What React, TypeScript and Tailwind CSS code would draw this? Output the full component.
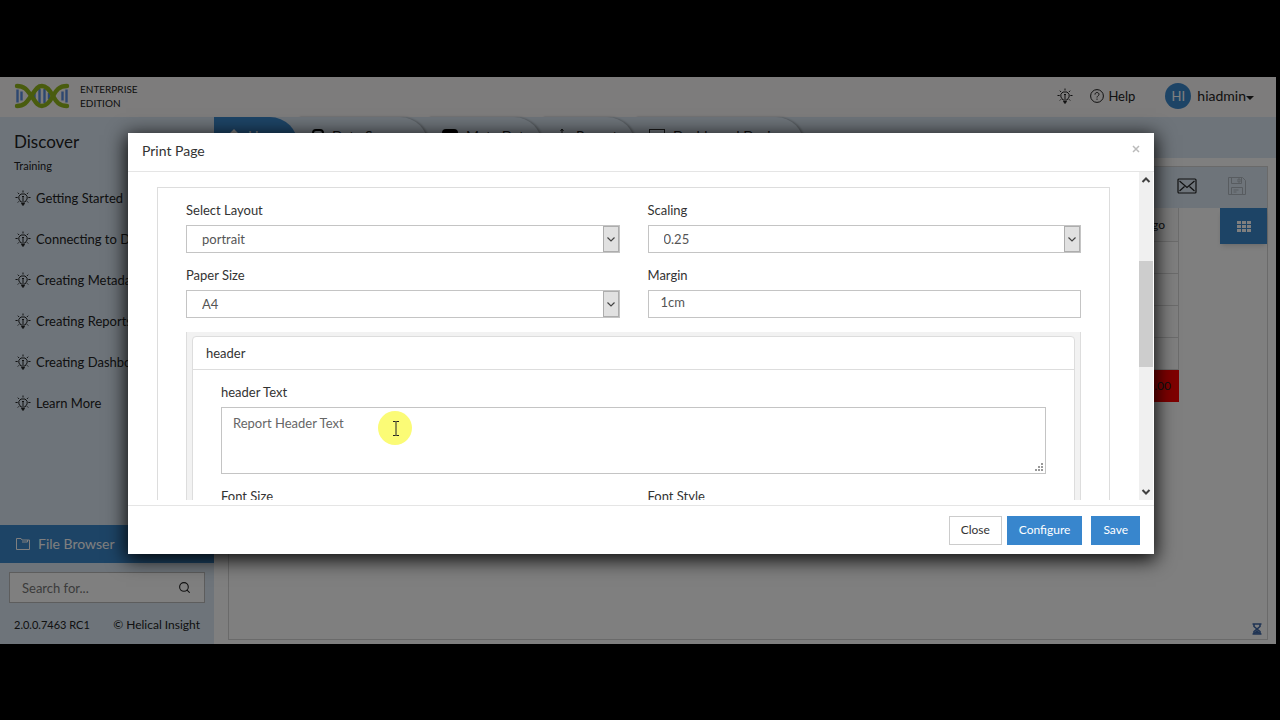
import type { ReactNode } from 'react';
import { Search } from 'lucide-react';

const TRAINING = [
  'Getting Started',
  'Connecting to Data',
  'Creating Metadata',
  'Creating Reports',
  'Creating Dashboard',
  'Learn More',
];

const ROWS = ['', '', '', ''];

function Bulb({ className = '' }: { className?: string }) {
  return (
    <svg viewBox="0 0 16 16" className={`h-4 w-4 shrink-0 ${className}`} fill="none" stroke="currentColor" strokeWidth="1">
      <path d="M6 12L3.900 9V6.200L6 4h4l2.100 2.200V9L10 12z" />
      <path d="M7 6.500h2M8 6.500v4.500" />
      <path d="M6.500 13.500h3L8 15.500z" fill="currentColor" />
      <path d="M8 .5v2M2.800 2.700l1.400 1.400M13.200 2.700l-1.400 1.400M.5 7.500h2.200M13.300 7.500h2.200M2.800 12.500l1.200-1.200M13.200 12.500l-1.200-1.200" />
    </svg>
  );
}

function Logo() {
  return (
    <svg viewBox="0 0 56 26" className="h-[26px] w-14" fill="none" strokeLinecap="round">
      <path d="M3.500 6.500v13M7.500 8.500v9M20.500 10v6M25.500 6v14M30.500 6v14M35 10v6M48.500 8.500v9M52.500 6.500v13" stroke="#5b8fe0" strokeWidth="2.400" strokeLinecap="butt" />
      <path d="M3 23C11 23 13.500 18 17.500 12.500S23 3 28 3s8 4.500 11 10 6 10 14 10" stroke="#93b81d" strokeWidth="4.400" />
      <path d="M3 3c8 0 10.500 4.500 14.500 10S23 23 28 23s8-4.500 11-10S45 3 53 3" stroke="#93b81d" strokeWidth="4.400" />
    </svg>
  );
}

function Tab({ icon, label, className }: { icon: ReactNode; label: string; className: string }) {
  return (
    <button className={`flex h-full items-center gap-2 overflow-hidden whitespace-nowrap rounded-tr-[28px] pb-1 pl-[14px] text-left text-[14px] ${className}`}>
      {icon}
      {label}
    </button>
  );
}

function SelectField({ id, label, value }: { id: string; label: string; value: string }) {
  return (
    <div className="flex-1">
      <label htmlFor={id} className="mb-[5px] block leading-5">{label}</label>
      <div className="relative">
        <select id={id} defaultValue={value} className="block h-7 w-full appearance-none border border-[#c4c4c4] bg-white pl-[15px] text-[#555]">
          <option>{value}</option>
        </select>
        <span className="pointer-events-none absolute inset-y-px right-px flex w-4 items-center justify-center border border-[#adadad] bg-[#e1e1e1]">
          <svg viewBox="0 0 10 10" className="h-[10px] w-[10px]" fill="none" stroke="#444" strokeWidth="1.200">
            <path d="M1.500 3.500 5 7l3.500-3.500" />
          </svg>
        </span>
      </div>
    </div>
  );
}

function Header() {
  return (
    <header className="flex h-10 shrink-0 items-center bg-[#fbf8f8] pb-[2px] pl-[14px] pr-[22px]">
      <Logo />
      <p className="ml-[10px] text-[10px] leading-[14px]">
        ENTERPRISE
        <br />
        EDITION
      </p>
      <div className="ml-auto flex items-center">
        <Bulb />
        <a href="#help" className="ml-[17px] flex items-center gap-1">
          <svg viewBox="0 0 14 14" className="h-[14px] w-[14px]" fill="none" stroke="currentColor">
            <circle cx="7" cy="7" r="6.400" />
            <path d="M5 5.600C5 4.300 5.800 3.500 7 3.500s2 .8 2 1.900c0 1.300-2 1.600-2 3.100M7 9.600v1.200" />
          </svg>
          Help
        </a>
        <span className="ml-[30px] flex h-[26px] w-[26px] items-center justify-center rounded-full bg-[#3b88cc] text-white">HI</span>
        <button className="ml-[6px] flex items-center text-[14px]">
          hiadmin
          <svg viewBox="0 0 8 4" className="mt-1 h-1 w-2" fill="currentColor"><path d="M0 0h8L4 4z" /></svg>
        </button>
      </div>
    </header>
  );
}

function Sidebar() {
  return (
    <aside className="flex w-[214px] shrink-0 flex-col bg-[#dce9f5]">
      <h2 className="pl-[14px] pt-[13px] text-[17px] leading-6">Discover</h2>
      <p className="pl-[14px] pt-1 text-[11px] leading-4">Training</p>
      <ul className="mt-[3px]">
        {TRAINING.map((item) => (
          <li key={item} className="flex h-[41px] items-center pl-[15px]">
            <a href="#training" className="flex items-center gap-[5px] whitespace-nowrap">
              <Bulb />
              {item}
            </a>
          </li>
        ))}
      </ul>
      <button className="mt-auto flex h-[38px] shrink-0 items-center gap-2 bg-[#3b88cc] pl-4 text-[14px] text-white">
        <svg viewBox="0 0 14 12" className="h-3 w-[14px]" fill="none" stroke="currentColor">
          <path d="M.5.500h4.500l1 1.500h7.500v9.500H.5zM6 4h5.500V2" />
        </svg>
        File Browser
      </button>
      <div className="mx-[9px] mb-[10px] mt-[9px] flex h-[31px] shrink-0 items-center border border-[#bbb] bg-white pr-[13px]">
        <input type="text" aria-label="Search" placeholder="Search for..." className="min-w-0 flex-1 pl-3 placeholder:text-[#777]" />
        <button aria-label="Find"><Search size={13} strokeWidth={2} /></button>
      </div>
      <div className="flex h-[31px] shrink-0 justify-between px-[14px] pt-[5px] leading-[14px]">
        <span className="text-[11px]">2.0.0.7463 RC1</span>
        <span className="text-[12px]">© Helical Insight</span>
      </div>
    </aside>
  );
}

function Workspace() {
  return (
    <main className="flex min-w-0 flex-1 flex-col bg-white">
      <nav className="flex h-[41px] shrink-0 bg-[#dce9f5]">
        <Tab className="w-[84px] bg-[#3b88cc] text-white" label="Home" icon={<svg viewBox="0 0 12 14" className="h-[14px] w-3" fill="currentColor"><path d="M6 0l6 6h-2v7H2V6H0z" /></svg>} />
        <Tab className="w-[130px] shadow-[2px_0_2px_#aab2ba]" label="Data Sources" icon={<span className="h-[14px] w-3 rounded-sm border-2 border-black" />} />
        <Tab className="w-[114px] shadow-[2px_0_2px_#aab2ba]" label="Meta Data" icon={<span className="h-[14px] w-4 rounded-sm bg-black" />} />
        <Tab className="w-[93px] shadow-[2px_0_2px_#aab2ba]" label="Reports" icon={<svg viewBox="0 0 12 16" className="h-4 w-3" fill="none" stroke="currentColor"><path d="M6 1v14M4.500 3 6 1l1.500 2" /></svg>} />
        <Tab className="w-[169px] shadow-[2px_0_2px_#aab2ba]" label="Dashboard Designer" icon={<span className="h-[14px] w-4 border border-[#333]" />} />
      </nav>
      <section className="mb-1 ml-[14px] mr-2 mt-2 flex flex-1 flex-col border border-[#d4d4d4]">
        <div className="flex h-[41px] shrink-0 items-center justify-end gap-[30px] bg-[#dce9f5] pb-1 pr-5">
          <button aria-label="Mail">
            <svg viewBox="0 0 20 16" className="h-4 w-5" fill="none" stroke="currentColor" strokeWidth="1.200">
              <rect x="1" y="1" width="18" height="14" rx="1" />
              <path d="M2.500 3 10 9.500 17.500 3M2.500 13l5-4.500M17.500 13l-5-4.500" />
            </svg>
          </button>
          <button aria-label="Save report" className="text-[#b0b8c0]">
            <svg viewBox="0 0 20 20" className="h-5 w-5" fill="none" stroke="currentColor">
              <path d="M1.500 1.500h14l3 3v14h-17zM4.500 1.500v6h10v-6M11 3v3h2V3zM4.500 18.500v-7h11v7M6.500 14h5M6.500 16h3" />
            </svg>
          </button>
        </div>
        <div className="flex flex-1 justify-between">
          <table className="mr-[41px] h-fit flex-1 text-right text-[12px]">
            <tbody className="flex flex-col">
              <tr className="flex h-[34px] items-center justify-end border-b border-r border-[#d8d8d8] bg-[#f9f9f9] pr-[13px]"><td>Chicago</td></tr>
              {ROWS.map((row, i) => (
                <tr key={i} className="flex h-8 border-b border-r border-[#d8d8d8]"><td>{row}</td></tr>
              ))}
              <tr className="flex h-8 items-center justify-end bg-[#f00] pr-2"><td>0.00</td></tr>
            </tbody>
          </table>
          <div className="flex flex-col items-end justify-between">
            <button aria-label="Grid" className="flex h-9 w-[47px] items-center justify-center bg-[#3b88cc] text-white shadow-md">
              <svg viewBox="0 0 14 11" className="h-[11px] w-[14px]" fill="currentColor">
                <path d="M0 0h4v3H0zM5 0h4v3H5zM10 0h4v3h-4zM0 4h4v3H0zM5 4h4v3H5zM10 4h4v3h-4zM0 8h4v3H0zM5 8h4v3H5zM10 8h4v3h-4z" />
              </svg>
            </button>
            <svg viewBox="0 0 10 12" className="mb-1 mr-[5px] h-3 w-[10px]" fill="none" stroke="#3f68a8" strokeWidth="1.600">
              <path d="M.5 1h9M.5 11h9M2 1.500v2L5 6l3-2.500v-2M2 10.500v-2L5 6l3 2.500v2" />
              <path d="M3 10h4L5 8z" fill="#3f68a8" />
            </svg>
          </div>
        </div>
      </section>
    </main>
  );
}

function ScrollBar() {
  return (
    <div className="mr-px flex w-[14px] shrink-0 flex-col justify-between bg-[#f0f0f0] py-1">
      <svg viewBox="0 0 10 8" className="mx-auto h-2 w-[10px]" fill="none" stroke="#404040" strokeWidth="2"><path d="M1.500 6 5 2.500 8.500 6" /></svg>
      <div className="mb-11 h-[106px] bg-[#cdcdcd]" />
      <svg viewBox="0 0 10 8" className="mx-auto h-2 w-[10px]" fill="none" stroke="#404040" strokeWidth="2"><path d="M1.500 2 5 5.500 8.500 2" /></svg>
    </div>
  );
}

function PrintDialog() {
  return (
    <div role="dialog" aria-label="Print Page" className="relative flex min-w-0 flex-1 flex-col bg-white text-[#333] shadow-[0_4px_18px_2px_rgba(0,0,0,0.9)]">
      <div className="flex h-[39px] shrink-0 items-center justify-between border-b border-[#e5e5e5] px-[14px] pb-[2px]">
        <h1 className="text-[14px]">Print Page</h1>
        <button aria-label="Dismiss" className="mb-1 text-[#bbb]">
          <svg viewBox="0 0 8 8" className="h-2 w-2" fill="none" stroke="currentColor" strokeWidth="1.500"><path d="M1 1l6 6M7 1 1 7" /></svg>
        </button>
      </div>

      {/* Body */}
      <div className="mb-[5px] flex min-h-0 flex-1">
        <div className="min-w-0 flex-1 overflow-hidden px-[29px] pt-[15px]">
          <div className="border border-[#ddd] px-7 pt-3">
            <div className="flex gap-7">
              <SelectField id="layout" label="Select Layout" value="portrait" />
              <SelectField id="scaling" label="Scaling" value="0.25" />
            </div>
            <div className="mt-3 flex gap-7">
              <SelectField id="paper" label="Paper Size" value="A4" />
              <div className="flex-1">
                <label htmlFor="margin" className="mb-[5px] block leading-5">Margin</label>
                <input id="margin" type="text" defaultValue="1cm" className="block h-7 w-full border border-[#c4c4c4] bg-white pb-1 pl-3 text-[#555]" />
              </div>
            </div>
            <div className="mt-[14px] border-x border-[#ddd] bg-[#f2f2f2] px-[5px] pt-1">
              <div className="rounded-t border border-[#ddd] bg-white">
                <h2 className="flex h-[33px] items-center border-b border-[#ddd] pb-px pl-[13px]">header</h2>
                <div className="px-7 pt-3">
                  <label htmlFor="header-text" className="mb-[5px] block leading-5">header Text</label>
                  <div className="relative">
                    <textarea id="header-text" defaultValue="Report Header Text" className="block h-[67px] w-full resize-none border border-[#c4c4c4] px-[11px] py-[5px] leading-5 text-[#666]" />
                    <svg viewBox="0 0 9 9" className="absolute bottom-[2px] right-[2px] h-[9px] w-[9px]" fill="#999">
                      <path d="M6 0h2v2H6zM6 3h2v2H6zM3 3h2v2H3zM6 6h2v2H6zM3 6h2v2H3zM0 6h2v2H0z" />
                    </svg>
                  </div>
                  <div className="flex gap-7 pb-10 pt-3">
                    <span className="flex-1 leading-5">Font Size</span>
                    <span className="flex-1 leading-5">Font Style</span>
                  </div>
                </div>
              </div>
            </div>
          </div>
        </div>
        <ScrollBar />
      </div>

      {/* Actions */}
      <div className="flex h-[49px] shrink-0 items-center justify-end border-t border-[#e5e5e5] pr-[14px] text-[12px]">
        <button className="h-[29px] border border-[#ccc] bg-white px-[11px]">Close</button>
        <button className="ml-[5px] h-[29px] bg-[#3886cd] px-3 text-white">Configure</button>
        <button className="ml-[9px] h-[29px] bg-[#3886cd] px-3 text-white">Save</button>
      </div>

      {/* Pointer */}
      <svg viewBox="0 0 34 34" className="pointer-events-none absolute left-[250px] top-[278px] h-[34px] w-[34px]" fill="none">
        <circle cx="17" cy="17" r="17" fill="#fbfb76" />
        <path d="M15 10.500h2.500l.5.500.5-.5H21M18 11v13M15 24.500h2.500l.5-.5.5.5H21" stroke="#222" />
      </svg>
    </div>
  );
}

export default function App() {
  return (
    <div className="flex h-screen flex-col bg-black pb-[76px] pt-[77px] font-['Lato',sans-serif] text-[13px] leading-5 text-[#222]">
      <div className="relative flex min-h-0 flex-1 flex-col overflow-hidden pr-1">
        <Header />
        <div className="flex min-h-0 flex-1">
          <Sidebar />
          <Workspace />
        </div>
        <div className="absolute inset-0 flex bg-black/50 pb-[90px] pl-32 pr-[126px] pt-14">
          <PrintDialog />
        </div>
      </div>
    </div>
  );
}
